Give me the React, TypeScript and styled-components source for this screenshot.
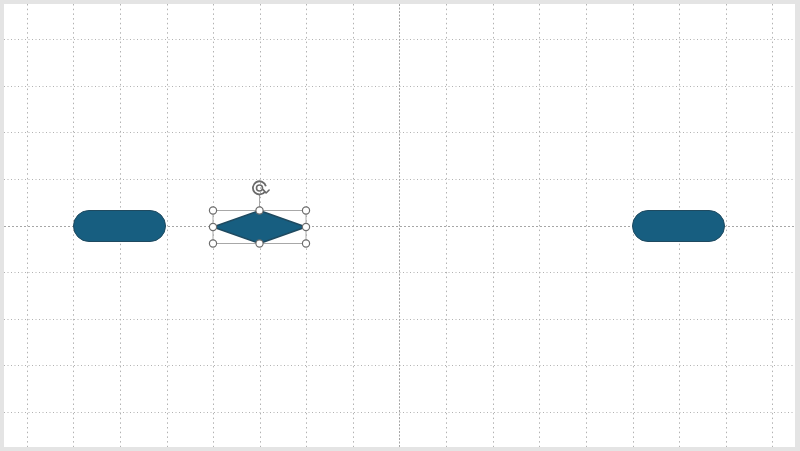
import React from "react";
import styled, { createGlobalStyle } from "styled-components";

const SLIDE_W = 791;
const SLIDE_H = 443;
const STEP = 46.6;

const GlobalStyle = createGlobalStyle`
  html, body {
    margin: 0;
    padding: 0;
    background: #e4e4e4;
    font-family: "Liberation Sans", Arial, sans-serif;
  }
`;

const Workspace = styled.div`
  width: 800px;
  height: 451px;
  box-sizing: border-box;
  padding: 4px 0 0 4px;
  background: #e4e4e4;
`;

const Slide = styled.div`
  position: relative;
  width: ${SLIDE_W}px;
  height: ${SLIDE_H}px;
  background: #ffffff;
  overflow: hidden;
`;

const GridLayer = styled.svg`
  position: absolute;
  inset: 0;
`;

const Pill = styled.div<{ $left: number }>`
  position: absolute;
  left: ${(p) => p.$left}px;
  top: 206px;
  width: 93px;
  height: 32px;
  box-sizing: border-box;
  border-radius: 16px;
  background: #175e80;
  border: 1.5px solid #1f4a60;
`;

const Selected = styled.svg`
  position: absolute;
  left: 200px;
  top: 170px;
  overflow: visible;
`;

const Grid: React.FC = () => {
  const cx = SLIDE_W / 2;
  const cy = SLIDE_H / 2;
  const xs: number[] = [];
  const ys: number[] = [];
  for (let k = -8; k <= 8; k++) if (k !== 0) xs.push(cx + k * STEP);
  for (let k = -4; k <= 4; k++) if (k !== 0) ys.push(cy + k * STEP);
  return (
    <GridLayer width={SLIDE_W} height={SLIDE_H}>
      {xs.map((x) => (
        <line
          key={"v" + x}
          x1={Math.round(x) + 0.5}
          x2={Math.round(x) + 0.5}
          y1={0}
          y2={SLIDE_H}
          stroke="#b2b2b2"
          strokeWidth={1}
          strokeDasharray="1.5 3.2"
        />
      ))}
      {ys.map((y) => (
        <line
          key={"h" + y}
          y1={Math.round(y) + 0.5}
          y2={Math.round(y) + 0.5}
          x1={0}
          x2={SLIDE_W}
          stroke="#b2b2b2"
          strokeWidth={1}
          strokeDasharray="1 2.5"
        />
      ))}
      <line x1={395.5} x2={395.5} y1={0} y2={SLIDE_H} stroke="#a6a6a6" strokeWidth={1} strokeDasharray="2 1.5" />
      <line y1={222.5} y2={222.5} x1={0} x2={SLIDE_W} stroke="#a6a6a6" strokeWidth={1} strokeDasharray="2 2" />
    </GridLayer>
  );
};

const SelectedDiamond: React.FC = () => {
  // local coords: box from (9,36) to (102,69)
  const l = 9, r = 102, t = 36.5, b = 69.5;
  const mx = (l + r) / 2, my = (t + b) / 2;
  const handles: [number, number][] = [
    [l, t], [mx, t], [r, t],
    [l, my], [r, my],
    [l, b], [mx, b], [r, b],
  ];
  return (
    <Selected width={112} height={80}>
      <polygon
        points={`${l},${my} ${mx},${t} ${r},${my} ${mx},${b}`}
        fill="#175e80"
        stroke="#1f4a60"
        strokeWidth={1.5}
        strokeLinejoin="round"
      />
      <rect x={l} y={t} width={r - l} height={b - t} fill="none" stroke="#a8a8a8" strokeWidth={1} />
      <line x1={mx} x2={mx} y1={21} y2={t} stroke="#a8a8a8" strokeWidth={1} />
      {/* rotate handle */}
      <g transform={`translate(${mx},${14})`} fill="none" stroke="#6a6a6a">
        <path d="M 5.6 3.4 A 6.6 6.6 0 1 1 6.4 -1.8" strokeWidth={1.8} />
        <circle r={3} strokeWidth={1.6} />
        <path d="M 3.6 1.6 L 6.6 5 L 9.6 2" strokeWidth={1.6} strokeLinejoin="round" strokeLinecap="round" />
      </g>
      {handles.map(([x, y]) => (
        <circle key={`${x}-${y}`} cx={x} cy={y} r={3.6} fill="#ffffff" stroke="#6e6e6e" strokeWidth={1.2} />
      ))}
    </Selected>
  );
};

const App: React.FC = () => {
  return (
    <>
      <GlobalStyle />
      <Workspace>
        <Slide>
          <Grid />
          <Pill $left={69} />
          <Pill $left={628} />
          <SelectedDiamond />
        </Slide>
      </Workspace>
    </>
  );
};

export default App;
